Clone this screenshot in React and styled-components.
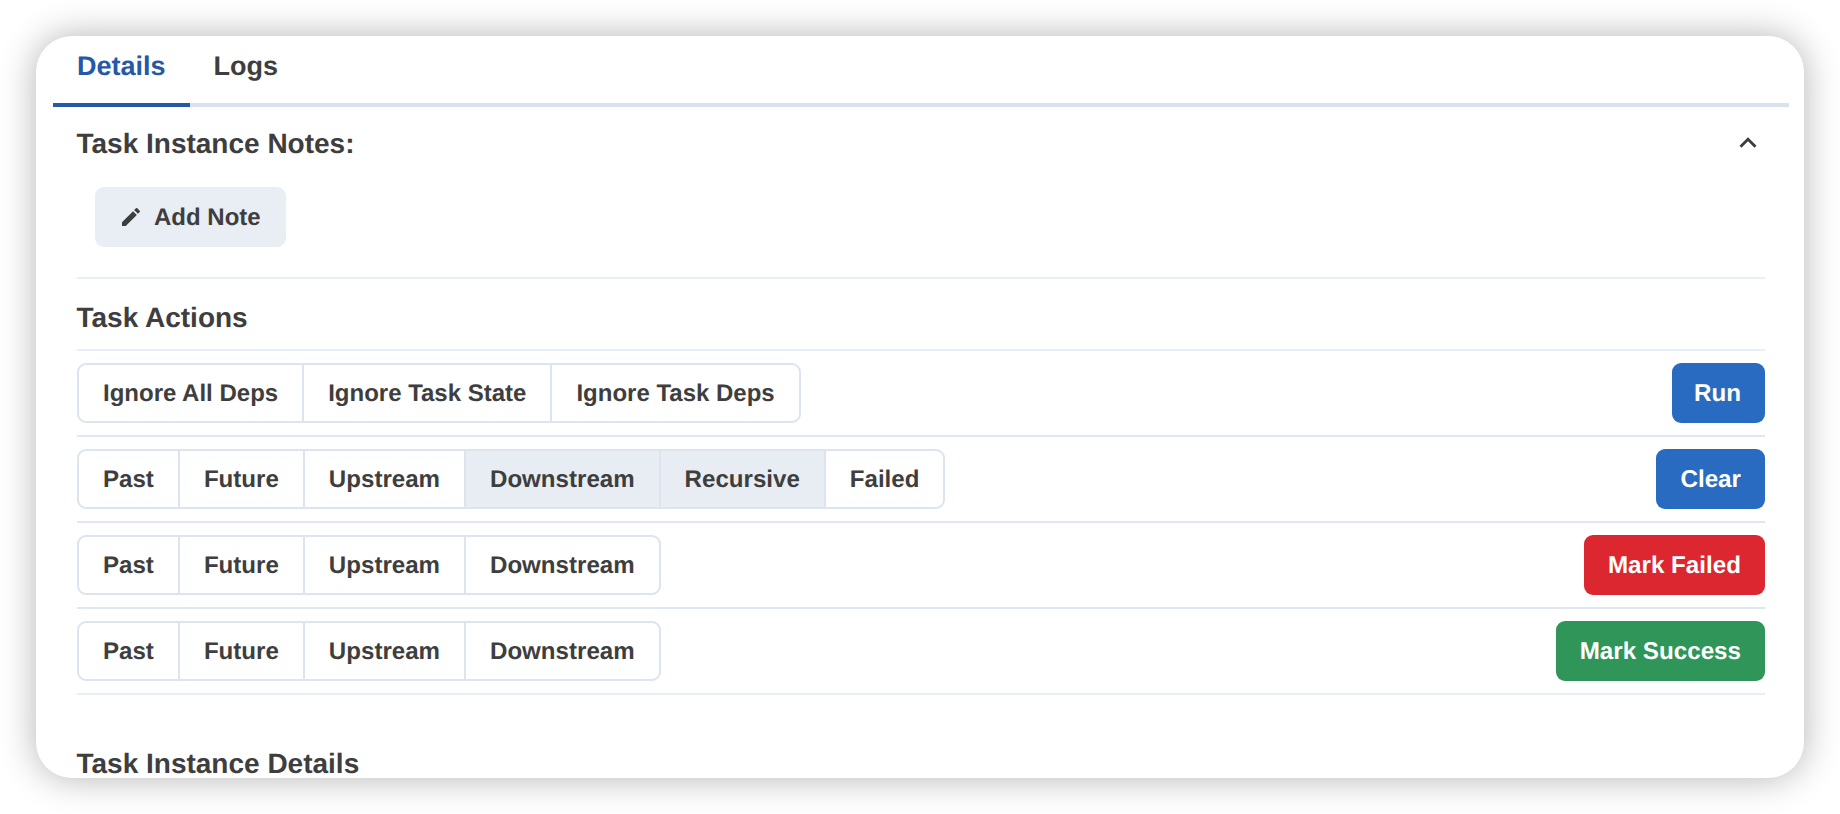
import React from "react";
import styled, { createGlobalStyle } from "styled-components";
import { MdEdit, MdExpandLess } from "react-icons/md";

const GlobalStyle = createGlobalStyle`
    html, body {
        margin: 0;
        padding: 0;
        height: 100%;
        background: #fff;
        overflow: hidden;
    }
    body {
        font-family: "Liberation Sans", Arial, sans-serif;
        color: #3e3e3e;
        text-rendering: geometricPrecision;
    }
    * {
        box-sizing: border-box;
    }
`;

const Page = styled.div`
    width: 1840px;
    height: 814px;
    padding: 36px;
`;

const Card = styled.div`
    height: 742px;
    padding: 0 15px 0 17px;
    background: #fff;
    border-radius: 36px;
    box-shadow: 0 0 36px rgba(0, 0, 0, 0.3);
    overflow: hidden;
`;

const TabList = styled.div`
    display: flex;
    border-bottom: 4px solid #d9e3ed;
`;

const Tab = styled.div`
    padding: 10px 24px 17px;
    margin-bottom: -4px;
    font-size: 27px;
    font-weight: 700;
    line-height: 40px;
    color: ${(props) => (props.$active ? "#2558a5" : "#3e3e3e")};
    border-bottom: 4px solid ${(props) => (props.$active ? "#2558a5" : "transparent")};
`;

const Panel = styled.div`
    padding: 17px 24px 0;
`;

const Heading = styled.div`
    font-size: 28px;
    font-weight: 700;
    line-height: 40px;
    margin-left: -0.5px;
`;

const NotesHeader = styled.div`
    display: flex;
    align-items: center;
    justify-content: space-between;

    svg {
        margin-bottom: 3px;
    }
`;

const NoteButton = styled.div`
    display: inline-flex;
    align-items: center;
    gap: 11px;
    height: 60px;
    margin: 23px 0 0 18px;
    padding: 2px 25px 0 24px;
    background: #e9eef5;
    border-radius: 9px;
    font-size: 24px;
    font-weight: 700;

    svg {
        margin-top: -2px;
    }
`;

const Divider = styled.div`
    height: 2px;
    margin-top: 29.5px;
    background: #e8eef5;
`;

const ActionsHeading = styled(Heading)`
    margin-top: 19px;
    margin-bottom: 11.5px;
`;

const Row = styled.div`
    display: flex;
    align-items: center;
    justify-content: space-between;
    padding: 12px 0;
    border-top: 2px solid ${(props) => (props.$light ? "#e8eef5" : "#dfe7f0")};
    &:last-of-type {
        border-bottom: 2px solid #e8eef5;
    }
`;

const Group = styled.div`
    display: flex;
    height: 60px;
    font-size: ${(props) => props.$size || 24.1}px;
    font-weight: 700;
`;

const Option = styled.div`
    display: flex;
    align-items: center;
    padding: 2px 24px 0;
    margin-left: -2px;
    background: ${(props) => (props.$selected ? "#e8edf4" : "#fff")};
    border: 2px solid #dbe4ef;
    &:first-child {
        margin-left: 0;
        border-radius: 9px 0 0 9px;
    }
    &:last-child {
        border-radius: 0 9px 9px 0;
    }
`;

const ActionButton = styled.div`
    display: flex;
    align-items: center;
    height: 60px;
    padding: 2px 24px 0 ${(props) => props.$pad || 24}px;
    background: ${(props) => props.$color};
    border-radius: 9px;
    color: #fff;
    font-size: 24.2px;
    font-weight: 700;
`;

const DetailsHeading = styled(Heading)`
    margin-top: 48.5px;
`;

const rows = [
    {
        options: [{ label: "Ignore All Deps" }, { label: "Ignore Task State" }, { label: "Ignore Task Deps" }],
        action: "Run",
        color: "#2a6bc2",
        pad: 22,
        size: 24,
        light: true,
    },
    {
        options: [
            { label: "Past" },
            { label: "Future" },
            { label: "Upstream" },
            { label: "Downstream", selected: true },
            { label: "Recursive", selected: true },
            { label: "Failed" },
        ],
        action: "Clear",
        color: "#2a6bc2",
    },
    {
        options: [{ label: "Past" }, { label: "Future" }, { label: "Upstream" }, { label: "Downstream" }],
        action: "Mark Failed",
        color: "#dc2630",
    },
    {
        options: [{ label: "Past" }, { label: "Future" }, { label: "Upstream" }, { label: "Downstream" }],
        action: "Mark Success",
        color: "#2f9558",
    },
];

const App = () => {
    return (
        <Page>
            <GlobalStyle />
            <Card>
                <TabList>
                    <Tab $active>Details</Tab>
                    <Tab>Logs</Tab>
                </TabList>
                <Panel>
                    <NotesHeader>
                        <Heading>Task Instance Notes:</Heading>
                        <MdExpandLess size={34} />
                    </NotesHeader>
                    <NoteButton>
                        <MdEdit size={24} />
                        Add Note
                    </NoteButton>
                    <Divider />
                    <ActionsHeading>Task Actions</ActionsHeading>
                    <div>
                        {rows.map((row) => (
                            <Row key={row.action} $light={row.light}>
                                <Group $size={row.size}>
                                    {row.options.map((option) => (
                                        <Option key={option.label} $selected={option.selected}>
                                            {option.label}
                                        </Option>
                                    ))}
                                </Group>
                                <ActionButton $color={row.color} $pad={row.pad}>
                                    {row.action}
                                </ActionButton>
                            </Row>
                        ))}
                    </div>
                    <DetailsHeading>Task Instance Details</DetailsHeading>
                </Panel>
            </Card>
        </Page>
    );
};

export default App;
